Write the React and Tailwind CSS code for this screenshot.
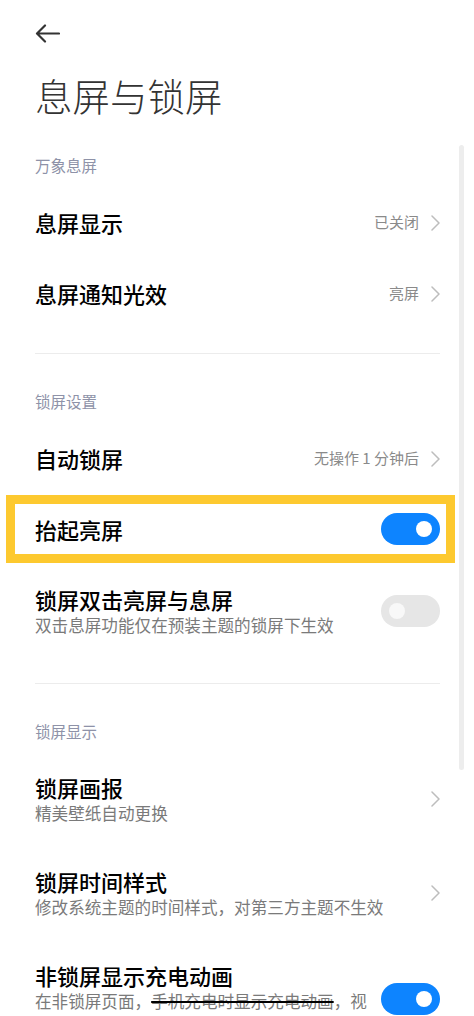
import React from 'react';

const Chevron = () => (
  <svg width="9" height="16" viewBox="0 0 9 16" fill="none" className="shrink-0">
    <polyline points="1,1 8,8 1,15" stroke="#bdbdbd" strokeWidth="1.5" strokeLinecap="round" strokeLinejoin="round" />
  </svg>
);

const Toggle = ({ on }) =>
  on ? (
    <div className="w-[59px] h-[32px] rounded-full bg-[#0d84ff] flex items-center justify-end pr-[8px] shrink-0">
      <div className="w-[16px] h-[16px] rounded-full bg-white" />
    </div>
  ) : (
    <div className="w-[59px] h-[32px] rounded-full bg-[#e6e6e6] flex items-center pl-[8px] shrink-0">
      <div className="w-[16px] h-[16px] rounded-full bg-[#f8f8f8]" />
    </div>
  );

const SectionHeader = ({ children, top }) => (
  <div className={`${top} mb-[11px] text-[15.5px] leading-[20px] text-[#8e92a8]`}>{children}</div>
);

const Row = ({ title, value, children }) => (
  <div className="h-[71px] flex items-center justify-between">
    <div className="text-[22px] leading-[28px] font-medium text-black">{title}</div>
    {children ? (
      children
    ) : (
      <div className="flex items-center gap-[12px] translate-y-[1px]">
        <span className="text-[15px] text-[#8a8a8a]">{value}</span>
        <Chevron />
      </div>
    )}
  </div>
);

const TwoLineRow = ({ title, sub, right }) => (
  <div className="py-[21px] flex items-center justify-between gap-[8px]">
    <div className="flex flex-col">
      <div className="text-[22px] leading-[28px] font-medium text-black">{title}</div>
      <div className="text-[16.6px] leading-[24px] text-[#7a7a7a]">{sub}</div>
    </div>
    {right}
  </div>
);

const Divider = () => <div className="mt-[25px] h-px bg-[#ececec]" />;

export default function App() {
  return (
    <div className="relative w-[474px] h-[1016px] overflow-hidden bg-white font-['Noto_Sans_CJK_SC','Noto_Sans',sans-serif]">
      {/* scrollbar */}
      <div className="absolute left-[459px] top-[145px] w-[5px] h-[625px] rounded-full bg-[#ededed]" />

      <div className="pl-[35px] pr-[34px]">
        <div className="h-[66px] flex items-center">
          <svg width="25" height="19" viewBox="0 0 25 19" fill="none">
            <path d="M24 9.5H2.5M10 1.5L2 9.5L10 17.5" stroke="#333" strokeWidth="2.2" strokeLinecap="round" strokeLinejoin="round" />
          </svg>
        </div>
        <div className="mt-[7px] text-[37.5px] leading-[44px] font-light text-[#333]">息屏与锁屏</div>

        <SectionHeader top="mt-[38px]">万象息屏</SectionHeader>
        <Row title="息屏显示" value="已关闭" />
        <Row title="息屏通知光效" value="亮屏" />
        <Divider />

        <SectionHeader top="mt-[37px]">锁屏设置</SectionHeader>
        <Row title="自动锁屏" value="无操作 1 分钟后" />
        <div className="relative">
          <Row title="抬起亮屏">
            <Toggle on />
          </Row>
          <div className="absolute left-[-29px] right-[-15px] top-[2px] bottom-[1px] border-[9px] border-[#fdc92f] pointer-events-none" />
        </div>
        <TwoLineRow title="锁屏双击亮屏与息屏" sub="双击息屏功能仅在预装主题的锁屏下生效" right={<Toggle on={false} />} />
        <Divider />

        <SectionHeader top="mt-[37px]">锁屏显示</SectionHeader>
        <TwoLineRow title="锁屏画报" sub="精美壁纸自动更换" right={<Chevron />} />
        <TwoLineRow title="锁屏时间样式" sub="修改系统主题的时间样式，对第三方主题不生效" right={<Chevron />} />
        <TwoLineRow
          title="非锁屏显示充电动画"
          sub={
            <>
              在非锁屏页面，
              <span className="line-through decoration-black decoration-2">手机充电时显示充电动画</span>
              ，视
              <br />
              频播放时不显示
            </>
          }
          right={<Toggle on />}
        />
      </div>
    </div>
  );
}
